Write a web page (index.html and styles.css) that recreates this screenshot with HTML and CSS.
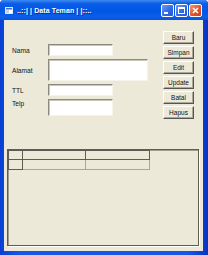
FILE: index.html
```html
<!DOCTYPE html>
<html lang="id">
<head>
    <meta charset="UTF-8">
    <title>Data Teman</title>
    <link rel="stylesheet" href="styles.css">
</head>
<body>
    <div class="window">
        <div class="titlebar">
            <svg class="app-icon" width="8" height="7" viewBox="0 0 8 7">
                <rect x="0.5" y="0.5" width="7" height="6" fill="#fff" stroke="#dfe8f7"/>
                <rect x="1" y="1" width="6" height="1.5" fill="#3a6fd8"/>
                <rect x="1" y="3" width="3" height="3" fill="#c8cfdc"/>
            </svg>
            <span class="title">..::| | Data Teman | |::..</span>
            <div class="controls">
                <span class="ctl min"><i></i></span>
                <span class="ctl max"><i></i></span>
                <span class="ctl close">
                    <svg width="7" height="7" viewBox="0 0 7 7">
                        <path d="M1 1 L6 6 M6 1 L1 6" stroke="#fff" stroke-width="1.6"/>
                    </svg>
                </span>
            </div>
        </div>

        <div class="client">
            <div class="top">
                <div class="fields">
                    <div class="row">
                        <label for="nama">Nama</label>
                        <input type="text" id="nama" class="txt">
                    </div>
                    <div class="row">
                        <label for="alamat">Alamat</label>
                        <input type="text" id="alamat" class="txt wide">
                    </div>
                    <div class="row">
                        <label for="ttl">TTL</label>
                        <input type="text" id="ttl" class="txt">
                    </div>
                    <div class="row">
                        <label for="telp" class="label-top">Telp</label>
                        <input type="text" id="telp" class="txt tall">
                    </div>
                </div>
                <div class="buttons">
                    <button>Baru</button>
                    <button>Simpan</button>
                    <button>Edit</button>
                    <button>Update</button>
                    <button>Batal</button>
                    <button>Hapus</button>
                </div>
            </div>

            <div class="grid">
                <table>
                    <tr class="head">
                        <td class="fixed"></td>
                        <td class="c1"></td>
                        <td class="c2"></td>
                    </tr>
                    <tr class="data">
                        <td class="fixed"></td>
                        <td></td>
                        <td></td>
                    </tr>
                </table>
            </div>
        </div>
    </div>
</body>
</html>
```

FILE: styles.css
```css
body {
    margin: 0;
    font-family: 'Liberation Sans', Arial, sans-serif;
}

.window {
    width: 208px;
    height: 255px;
    background: linear-gradient(to right, #0a3fd6, #1858e8 10%, #1858e8 90%, #0733c8);
    display: flex;
    flex-direction: column;
    border-radius: 4px 4px 0 0;
    overflow: hidden;
}

.titlebar {
    height: 20px;
    display: flex;
    align-items: center;
    padding-left: 5px;
    background: linear-gradient(#3f8cf3 0, #0a5ee8 18%, #0055e5 55%, #0a5fea 85%, #0c4fd8 100%);
}

.app-icon {
    display: block;
    margin-right: 4px;
}

.title {
    color: #fff;
    font-weight: bold;
    font-size: 7px;
    letter-spacing: 0.1px;
    text-shadow: 1px 1px 0 #0a2b8c;
    white-space: nowrap;
}

.controls {
    margin-left: auto;
    margin-right: 6px;
    display: flex;
    gap: 1px;
}

.ctl {
    width: 13px;
    height: 13px;
    box-sizing: border-box;
    border: 1px solid #fff;
    border-radius: 2px;
    background: linear-gradient(135deg, #6b9cf5, #2d66e3 60%, #2457d6);
    display: flex;
    align-items: center;
    justify-content: center;
    position: relative;
}

.ctl.min i {
    position: absolute;
    left: 2px;
    bottom: 2px;
    width: 4px;
    height: 2px;
    background: #fff;
}

.ctl.max i {
    width: 5px;
    height: 4px;
    border: 1px solid #fff;
    border-top-width: 2px;
}

.ctl.close {
    background: linear-gradient(135deg, #f29a78, #e2542c 55%, #c8401c);
}

.ctl.close svg {
    display: block;
}

.client {
    flex: 1;
    margin: 0 5px 4px 4px;
    background: #ece9d8;
    display: flex;
    flex-direction: column;
}

.top {
    height: 129px;
    display: flex;
    align-items: flex-start;
}

.fields {
    margin-left: 8px;
    margin-top: 24px;
}

.row {
    display: flex;
    align-items: center;
    margin-bottom: 3px;
}

.row + .row {
    margin-top: 1px;
}

.row label {
    width: 36px;
    font-size: 6.6px;
    color: #111;
}

.row .label-top {
    align-self: flex-start;
    line-height: 10px;
}

.txt {
    width: 65px;
    height: 12px;
    box-sizing: border-box;
    margin: 0;
    padding: 0;
    background: #fff;
    border: 1px solid;
    border-color: #8d8a7d #f4f3ec #f4f3ec #8d8a7d;
    box-shadow: inset 1px 1px 0 #c9c6b9;
}

.txt.wide {
    width: 100px;
    height: 22px;
}

.txt.tall {
    height: 17px;
}

.buttons {
    margin-left: auto;
    margin-right: 9px;
    margin-top: 11px;
    display: flex;
    flex-direction: column;
    gap: 2px;
}

.buttons button {
    width: 31px;
    height: 13px;
    box-sizing: border-box;
    margin: 0;
    padding: 0;
    font-family: 'Liberation Sans', Arial, sans-serif;
    font-size: 6.5px;
    color: #111;
    background: #ece9d8;
    border: 1px solid;
    border-color: #fff #555 #555 #fff;
    box-shadow: inset -1px -1px 0 #aca899;
}

.grid {
    margin-left: 3px;
    width: 192px;
    height: 97px;
    box-sizing: border-box;
    border: 1px solid #5f5d53;
    box-shadow: 1px 1px 0 #fff, inset 1px 1px 0 #a09d90;
}

.grid table {
    border-collapse: collapse;
}

.grid td {
    padding: 0;
    border: 1px solid #a9a79b;
}

.grid .head td {
    height: 8px;
    border-color: #5f5d53;
}

.grid .data td {
    height: 9px;
}

.grid .fixed {
    width: 13px;
    border-color: #5f5d53;
}

.grid .c1 {
    width: 62px;
}

.grid .c2 {
    width: 63px;
}
```
